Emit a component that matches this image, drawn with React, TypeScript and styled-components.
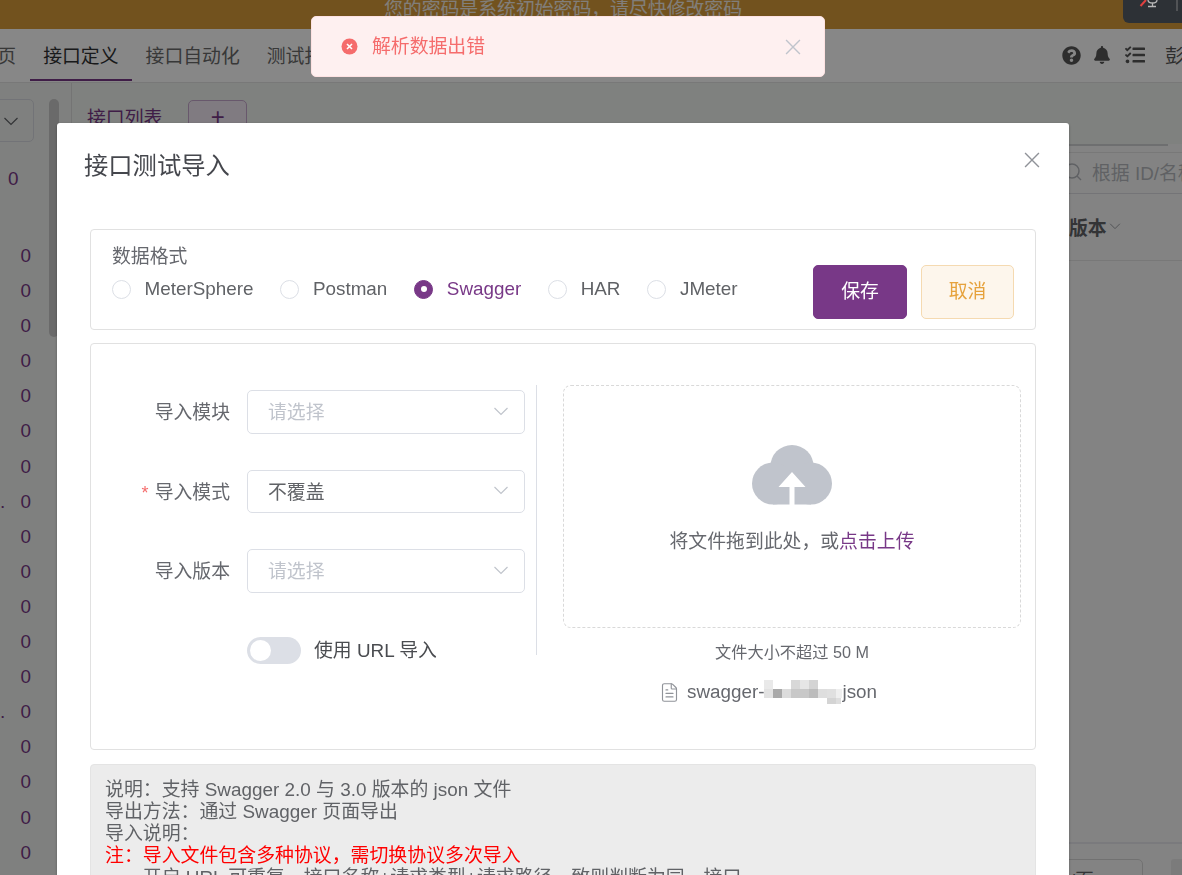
import React from "react";
import styled, { createGlobalStyle } from "styled-components";
import { FaQuestionCircle, FaBell, FaTasks } from "react-icons/fa";
import { FileText } from "lucide-react";

const Global = createGlobalStyle`
  html, body { margin: 0; height: 100%; overflow: hidden; background: #fff; }
  body { font-family: "Liberation Sans", "Noto Sans CJK SC", sans-serif; font-size: 18.85px; color: #66686e; }
  * { box-sizing: border-box; }
`;

const Page = styled.div`height: 875px; display: flex; flex-direction: column; overflow: hidden;`;
const Banner = styled.div`
  height: 29px; flex: none; background: #d89b3a; color: #f4efe6; overflow: hidden;
  display: flex; justify-content: center; padding-right: 56px; line-height: 20px;
`;
const Nav = styled.div`
  height: 54px; flex: none; background: #fff; border-bottom: 1px solid #e2e2e2;
  display: flex; align-items: stretch; justify-content: space-between; overflow: hidden;
`;
const NavTabs = styled.div`display: flex; margin-left: -35px;`;
const NavTab = styled.div<{ $active?: boolean }>`
  padding: 2px 13.5px 0; height: 52px; line-height: 52px; white-space: nowrap;
  color: ${(p) => (p.$active ? "#303133" : "#6a6a6a")};
  border-bottom: 2.5px solid ${(p) => (p.$active ? "#783887" : "transparent")};
`;
const NavRight = styled.div`display: flex; align-items: center; color: #555; padding-bottom: 1px; margin-right: -3px;`;
const NavIcon = styled.span<{ $gap: number }>`display: flex; margin-right: ${(p) => p.$gap}px; font-size: 19px;`;
const NavUser = styled.span`width: 20px; overflow: hidden; white-space: nowrap; color: #555; padding-bottom: 1px;`;

const Content = styled.div`flex: 1; display: flex; min-height: 0;`;
const Side = styled.div`
  width: 72px; flex: none; background: #f0f2f0; border-right: 1px solid #dcdcdc;
  padding-top: 16px; display: flex; overflow: hidden;
`;
const SideCol = styled.div`width: 49px; flex: none;`;
const SideSelect = styled.div`
  margin-left: -20px; width: 54px; height: 43px; border: 1px solid #d8dae0; border-radius: 5px;
  display: flex; align-items: center; justify-content: flex-end; padding-right: 14px; color: #606266;
`;
const SideFirst = styled.div`color: #783887; line-height: 22px; margin: 26px 0 47px 8px;`;
const SideRow = styled.div`
  height: 35.1px; line-height: 38px; display: flex; justify-content: space-between;
  padding-right: 18px; color: #783887;
`;
const SideThumb = styled.div`width: 10px; height: 238px; border-radius: 5px; background: #c8c8c8;`;

const Main = styled.div`flex: 1; min-width: 0; display: flex; flex-direction: column; background: #f8f8f8;`;
const MainTop = styled.div`height: 61px; flex: none; padding: 17px 14px 0 15px; background: #f0f4f0; display: flex; align-items: flex-start;`;
const ListTab = styled.div`color: #783887; line-height: 38px; margin-right: 26px;`;
const PlusButton = styled.div`
  width: 59px; height: 42px; border: 1px solid #c5a6cc; border-radius: 5px; background: #f1e9f3; color: #783887;
  display: flex; align-items: center; justify-content: center; font-size: 24px; padding-bottom: 8px;
`;
const TabLine = styled.div`height: 2px; flex: none; margin-right: 14px; background: #d0d2d4;`;
const Spacer8 = styled.div`height: 6px; flex: none;`;
const SearchRow = styled.div`
  height: 42px; flex: none; border-top: 1px solid #e2e2e2; border-bottom: 1px solid #dcdce0;
  display: flex; align-items: center; white-space: nowrap; overflow: hidden; padding: 0 0 3px 991px;
  color: #b5b8bd; gap: 9px;
  & > * { flex: none; }
`;
const TableHead = styled.div`
  height: 67px; flex: none; border-bottom: 1px solid #e2e2e2; padding: 0 0 2px 997px; display: flex; align-items: center;
  color: #606266; font-weight: 700; gap: 2px;
`;
const TableBody = styled.div`flex: 1;`;
const Footer = styled.div`height: 33px; flex: none; border-top: 2px solid #e6e6ec; padding: 15px 0 0 941px; display: flex; gap: 28px;`;
const PageSize = styled.div`width: 130px; height: 40px; border: 1px solid #d6d6d6; border-radius: 5px; padding: 5px 0 0 16px; color: #606266; flex: none; white-space: nowrap;`;
const PageNext = styled.div`width: 40px; height: 40px; background: #e8e8e8; border-radius: 3px; flex: none;`;

const Overlay = styled.div`position: fixed; inset: 0; background: rgba(0, 0, 0, 0.47); overflow: hidden;`;
const Dialog = styled.div`
  margin: 123px 0 0 57px; width: 1012px; background: #fff; border-radius: 3px; padding: 0 33px;
  box-shadow: 0 1px 3px rgba(0, 0, 0, 0.3);
`;
const DialogHead = styled.div`height: 106px; margin: 0 -5px 0 -6px; padding: 28px 0 0; display: flex; justify-content: space-between; align-items: flex-start;`;
const DialogTitle = styled.div`font-size: 24.300px; line-height: 30px; color: #45474d;`;
const CloseBox = styled.span`display: flex; padding: 1px 0 0; margin-right: 1px;`;

const FormatCard = styled.div`
  height: 101px; border: 1px solid #e1e1e1; border-radius: 4px; padding: 0 21px;
  display: flex; justify-content: space-between;
`;
const FormatLeft = styled.div`padding-top: 16px;`;
const FormatLabel = styled.div`line-height: 22px; margin-bottom: 10px;`;
const RadioRow = styled.div`display: flex;`;
const Radio = styled.div<{ $on?: boolean }>`
  display: flex; align-items: center; gap: 13.500px; margin-right: 27px; line-height: 22px;
  color: ${(p) => (p.$on ? "#783887" : "#606266")};
`;
const RadioDot = styled.span<{ $on?: boolean }>`
  width: 19px; height: 19px; border-radius: 50%; flex: none; display: flex; align-items: center; justify-content: center;
  border: 1px solid ${(p) => (p.$on ? "#783887" : "#dcdfe6")};
  background: ${(p) => (p.$on ? "#783887" : "#fff")};
  &::after { content: ""; width: 6px; height: 6px; border-radius: 50%; background: ${(p) => (p.$on ? "#fff" : "transparent")}; }
`;
const FormatButtons = styled.div`padding-top: 35px; display: flex; gap: 14px;`;
const Button = styled.div<{ $kind: "save" | "cancel" }>`
  width: ${(p) => (p.$kind === "save" ? 94 : 93)}px; height: 54px; border-radius: 5px; display: flex; align-items: center; justify-content: center;
  padding-bottom: 5px;
  background: ${(p) => (p.$kind === "save" ? "#783887" : "#fdf6ec")};
  color: ${(p) => (p.$kind === "save" ? "#fff" : "#e6a23c")};
  border: 1px solid ${(p) => (p.$kind === "save" ? "#783887" : "#f5dab1")};
`;

const ImportCard = styled.div`
  height: 407px; margin-top: 13px; border: 1px solid #e1e1e1; border-radius: 4px; display: flex; padding-top: 41px;
`;
const FormCol = styled.div`
  width: 446px; height: 270px; flex: none; padding: 5px 11px 0 0; border-right: 1px solid #dcdfe6;
`;
const FormRow = styled.div`display: flex; align-items: center; gap: 17px; margin-bottom: 36px;`;
const FormLabel = styled.div`width: 139px; text-align: right; flex: none; line-height: 22px; padding-top: 3px;`;
const Star = styled.span`color: #f56c6c; margin-right: 6px; font-size: 18px;`;
const Select = styled.div<{ $empty?: boolean }>`
  flex: 1; height: 43.5px; border: 1px solid #dcdfe6; border-radius: 5px; padding: 0 15px 2px 20px;
  display: flex; align-items: center; justify-content: space-between;
  color: ${(p) => (p.$empty ? "#c0c4cc" : "#606266")};
`;
const SwitchRow = styled.div`display: flex; align-items: center; gap: 13px; margin: -27.5px 0 0 156px;`;
const SwitchTrack = styled.span`width: 54px; height: 27px; border-radius: 14px; background: #dcdfe6; padding: 3px; display: flex;`;
const SwitchKnob = styled.span`width: 21px; height: 21px; border-radius: 50%; background: #fff;`;
const SwitchText = styled.span`color: #4a4c50; line-height: 26px;`;

const UploadCol = styled.div`width: 458px; margin-left: 26px; flex: none; text-align: center;`;
const Dropzone = styled.div`
  height: 243px; border: 1px dashed #d9d9d9; border-radius: 8px; padding-top: 59px;
  display: flex; flex-direction: column; align-items: center;
`;
const DropText = styled.div`margin-top: 24px; line-height: 26px;`;
const DropLink = styled.span`color: #783887;`;
const Tip = styled.div`font-size: 16.200px; margin-top: 14px; line-height: 20px;`;
const FileRow = styled.div`display: flex; align-items: center; justify-content: center; margin-top: 18px; height: 24px; padding-right: 48px;`;
const FileName = styled.span`margin-left: 7px;`;

const Note = styled.div`
  height: 200px; margin-top: 14px; border: 1px solid #e4e4e4; border-radius: 4px; background: #ececec;
  padding: 14px 14px; line-height: 22px; font-size: 18.900px; color: #606266;
`;
const NoteLine = styled.div<{ $red?: boolean }>`white-space: pre; color: ${(p) => (p.$red ? "#f00" : "inherit")};`;

const Message = styled.div`
  position: fixed; top: 16px; left: 311px; width: 514px; height: 61px; border-radius: 5px;
  background: #fef0f0; border: 1px solid #fde2e2; padding: 0 23px 0 29px; display: flex; align-items: center; color: #f56c6c;
`;
const MessageText = styled.span`flex: 1; margin-left: 14px; line-height: 26px;`;
const ShareBar = styled.div`
  position: fixed; top: 0; right: 0; width: 59px; height: 23px; background: #2d3136; border-bottom-left-radius: 6px;
  display: flex; justify-content: flex-end; padding-right: 4px;
`;

const Chevron = ({ size = 16, color = "#c0c4cc" }: { size?: number; color?: string }) => (
  <svg width={size} height={size} viewBox="0 0 16 16" fill="none"><path d="M1.5 5l6.5 6.5L14.500 5" stroke={color} strokeWidth="1.200" /></svg>
);
const Cross = ({ size = 15, color }: { size?: number; color: string }) => (
  <svg width={size} height={size} viewBox="0 0 15 15" fill="none"><path d="M1 1l13 13M14 1L1 14" stroke={color} strokeWidth="1.300" /></svg>
);
const Cloud = () => (
  <svg width="80" height="60" viewBox="0 0 80 60">
    <g fill="#c0c4cc">
      <circle cx="40" cy="21.700" r="21.700" />
      <circle cx="21" cy="38.500" r="21" />
      <circle cx="59" cy="38.500" r="21" />
      <rect x="21" y="30" width="38" height="29.500" />
    </g>
    <path d="M40 27l13.500 15H42.500v18h-5V42H26.500z" fill="#fff" />
  </svg>
);
const ErrorIcon = () => (
  <svg width="17" height="17" viewBox="0 0 17 17"><circle cx="8.500" cy="8.500" r="8" fill="#f56c6c" /><path d="M6 6l5 5M11 6l-5 5" stroke="#fff" strokeWidth="1.600" /></svg>
);
const Search = () => (
  <svg width="20" height="20" viewBox="0 0 20 20" fill="none" stroke="#b5b8bd" strokeWidth="1.500"><circle cx="9" cy="9" r="7" /><path d="M14 14l4 4" /></svg>
);
const MutedMic = () => (
  <svg width="40" height="23" viewBox="0 0 40 23" fill="none">
    <path d="M10 0c0 2 2 3 4.500 3S19 2 19 0M14.500 3v3M10 6.500h8" stroke="#b8b8b8" strokeWidth="1.300" />
    <path d="M2.500 6L8 0" stroke="#e04040" strokeWidth="2" />
    <path d="M39 0v11" stroke="#777" strokeWidth="1" />
  </svg>
);
const mosaic: [number, number, number, string][] = [
  [0, 0, 9, "#e9e9e9"], [27, 0, 9, "#d8d8d8"], [36, 0, 9, "#e6e6e6"], [45, 0, 9, "#d4d4d4"],
  [0, 9, 9, "#e2e2e2"], [9, 9, 9, "#a9a9a9"], [18, 9, 9, "#dcdcdc"], [27, 9, 18, "#c8c8c8"], [45, 9, 9, "#bcbcbc"],
  [54, 9, 9, "#dedede"], [63, 9, 9, "#e0e0e0"], [72, 9, 6, "#efefef"], [63, 18, 9, "#d4d4d4"], [72, 18, 5, "#dedede"],
];
const Mosaic = () => (
  <svg width="78" height="24" viewBox="0 0 78 24">
    {mosaic.map(([x, y, w, c]) => <rect key={`${x}-${y}`} x={x} y={y} width={w} height={y === 18 ? 6 : 9} fill={c} />)}
  </svg>
);

const dotted = new Set([7, 13]);
const rows = Array.from({ length: 18 }, (_, i) => i);

export default function App() {
  return (
    <>
      <Global />
      <Page>
        <Banner>您的密码是系统初始密码，请尽快修改密码</Banner>
        <Nav>
          <NavTabs>
            <NavTab>首页</NavTab>
            <NavTab $active>接口定义</NavTab>
            <NavTab>接口自动化</NavTab>
            <NavTab>测试报告</NavTab>
          </NavTabs>
          <NavRight>
            <NavIcon $gap={12}><FaQuestionCircle size={19} /></NavIcon>
            <NavIcon $gap={14}><FaBell size={18} /></NavIcon>
            <NavIcon $gap={20}><FaTasks size={20} /></NavIcon>
            <NavUser>彭</NavUser>
          </NavRight>
        </Nav>
        <Content>
          <Side>
            <SideCol>
              <SideSelect><Chevron color="#606266" /></SideSelect>
              <SideFirst>0</SideFirst>
              {rows.map((i) => (
                <SideRow key={i}><span>{dotted.has(i) ? "." : ""}</span><span>0</span></SideRow>
              ))}
            </SideCol>
            <SideThumb />
          </Side>
          <Main>
            <MainTop>
              <ListTab>接口列表</ListTab>
              <PlusButton>+</PlusButton>
            </MainTop>
            <TabLine />
            <Spacer8 />
            <SearchRow><Search /><span>根据 ID/名称</span></SearchRow>
            <TableHead>版本<Chevron size={12} color="#909399" /></TableHead>
            <TableBody />
            <Footer>
              <PageSize>10条/页</PageSize>
              <PageNext />
            </Footer>
          </Main>
        </Content>
      </Page>
      <Overlay>
        <Dialog>
          <DialogHead>
            <DialogTitle>接口测试导入</DialogTitle>
            <CloseBox><Cross size={16} color="#909399" /></CloseBox>
          </DialogHead>
          <FormatCard>
            <FormatLeft>
              <FormatLabel>数据格式</FormatLabel>
              <RadioRow>
                <Radio><RadioDot />MeterSphere</Radio>
                <Radio><RadioDot />Postman</Radio>
                <Radio $on><RadioDot $on />Swagger</Radio>
                <Radio><RadioDot />HAR</Radio>
                <Radio><RadioDot />JMeter</Radio>
              </RadioRow>
            </FormatLeft>
            <FormatButtons>
              <Button $kind="save">保存</Button>
              <Button $kind="cancel">取消</Button>
            </FormatButtons>
          </FormatCard>
          <ImportCard>
            <FormCol>
              <FormRow>
                <FormLabel>导入模块</FormLabel>
                <Select $empty>请选择<Chevron /></Select>
              </FormRow>
              <FormRow>
                <FormLabel><Star>*</Star>导入模式</FormLabel>
                <Select>不覆盖<Chevron /></Select>
              </FormRow>
              <FormRow>
                <FormLabel>导入版本</FormLabel>
                <Select $empty>请选择<Chevron /></Select>
              </FormRow>
              <FormRow />
              <SwitchRow>
                <SwitchTrack><SwitchKnob /></SwitchTrack>
                <SwitchText>使用 URL 导入</SwitchText>
              </SwitchRow>
            </FormCol>
            <UploadCol>
              <Dropzone>
                <Cloud />
                <DropText>将文件拖到此处，或<DropLink>点击上传</DropLink></DropText>
              </Dropzone>
              <Tip>文件大小不超过 50 M</Tip>
              <FileRow>
                <FileText size={21} color="#909399" strokeWidth={1.300} />
                <FileName>swagger-</FileName>
                <Mosaic />
                <span>json</span>
              </FileRow>
            </UploadCol>
          </ImportCard>
          <Note>
            <NoteLine>说明：支持 Swagger 2.0 与 3.0 版本的 json 文件</NoteLine>
            <NoteLine>导出方法：通过 Swagger 页面导出</NoteLine>
            <NoteLine>导入说明：</NoteLine>
            <NoteLine $red>注：导入文件包含多种协议，需切换协议多次导入</NoteLine>
            <NoteLine>{"　　开启 URL 可重复，接口名称+请求类型+请求路径一致则判断为同一接口"}</NoteLine>
          </Note>
        </Dialog>
      </Overlay>
      <Message>
        <ErrorIcon />
        <MessageText>解析数据出错</MessageText>
        <Cross size={16} color="#c0c4cc" />
      </Message>
      <ShareBar><MutedMic /></ShareBar>
    </>
  );
}
